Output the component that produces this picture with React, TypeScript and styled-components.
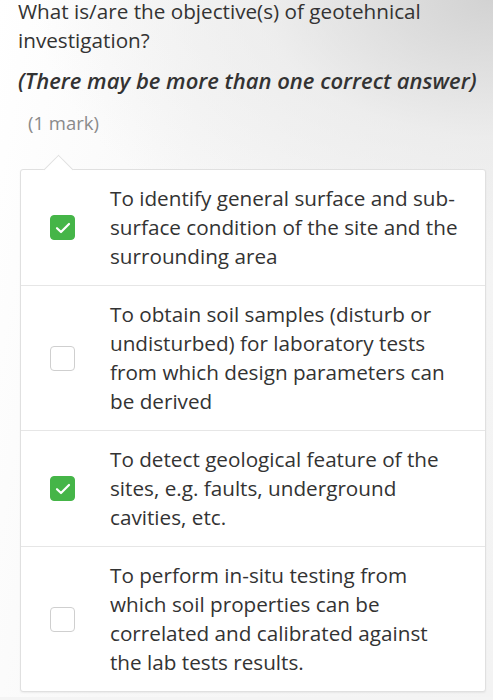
import styled, { createGlobalStyle } from 'styled-components';

const GlobalStyle = createGlobalStyle`
  html, body {
    margin: 0;
    padding: 0;
  }
  body {
    font-family: 'Open Sans', 'Noto Sans', sans-serif;
    background-color: #f4f4f4;
  }
`;

const Page = styled.div`
  min-height: 700px;
  box-sizing: border-box;
  padding: 0 7px 0 18px;
  background:
    radial-gradient(ellipse 460px 280px at 100% 0%, rgba(208, 208, 208, 0.95) 0%, rgba(228, 228, 228, 0.5) 50%, rgba(244, 244, 244, 0) 100%),
    linear-gradient(100deg, #ffffff 0%, #f8f8f8 35%, #f3f3f3 100%);
`;

const Question = styled.h2`
  margin: -3px 0 0;
  font-size: 20.7px;
  font-weight: 400;
  line-height: 29px;
  color: #333;
`;

const Hint = styled.p`
  margin: 11px 0 0;
  font-size: 22px;
  font-weight: 600;
  font-style: italic;
  line-height: 29px;
  color: #333;
`;

const Mark = styled.div`
  margin: 16px 0 0 10px;
  font-size: 18.5px;
  line-height: 24px;
  color: #8a8a8a;
`;

const Card = styled.div`
  position: relative;
  margin: 34px 0 0 2px;
  background: #fff;
  border: 1px solid #e0e0e0;
  border-radius: 3px;
  box-shadow: 0 1px 2px rgba(0, 0, 0, 0.06);

  &::before {
    content: '';
    position: absolute;
    top: -11px;
    left: 27px;
    width: 20px;
    height: 20px;
    background: #fff;
    border-left: 1px solid #e0e0e0;
    border-top: 1px solid #e0e0e0;
    transform: rotate(45deg);
  }
`;

const Option = styled.label`
  display: flex;
  align-items: center;
  padding: 14px 24px 14px 0;
  border-top: 1px solid #e6e6e6;

  &:first-child {
    border-top: none;
  }
`;

const BoxCell = styled.div`
  width: 89px;
  flex-shrink: 0;
  display: flex;
  padding-left: 29px;
  box-sizing: border-box;
`;

const Box = styled.span<{ $checked: boolean }>`
  width: 25px;
  height: 25px;
  box-sizing: border-box;
  border-radius: 4px;
  display: flex;
  align-items: center;
  justify-content: center;
  background: ${p => (p.$checked ? '#45b548' : '#fff')};
  border: 1px solid ${p => (p.$checked ? '#45b548' : '#cfcfcf')};
`;

const Text = styled.span`
  font-size: 20.7px;
  line-height: 29px;
  color: #333;
`;

const options = [
  {
    text: 'To identify general surface and sub-surface condition of the site and the surrounding area',
    checked: true,
  },
  {
    text: 'To obtain soil samples (disturb or undisturbed) for laboratory tests from which design parameters can be derived',
    checked: false,
  },
  {
    text: 'To detect geological feature of the sites, e.g. faults, underground cavities, etc.',
    checked: true,
  },
  {
    text: 'To perform in-situ testing from which soil properties can be correlated and calibrated against the lab tests results.',
    checked: false,
  },
];

const Check = () => (
  <svg width="16" height="12" viewBox="0 0 16 12" fill="none">
    <path d="M2 6.2 L6 10 L14 2" stroke="#fff" strokeWidth="2.2" strokeLinecap="round" strokeLinejoin="round" />
  </svg>
);

const App = () => {
  return (
    <>
      <GlobalStyle />
      <Page>
        <Question>What is/are the objective(s) of geotehnical investigation?</Question>
        <Hint>(There may be more than one correct answer)</Hint>
        <Mark>(1 mark)</Mark>
        <Card>
          {options.map((o, i) => (
            <Option key={i}>
              <BoxCell>
                <Box $checked={o.checked}>{o.checked && <Check />}</Box>
              </BoxCell>
              <Text>{o.text}</Text>
            </Option>
          ))}
        </Card>
      </Page>
    </>
  );
};

export default App;
